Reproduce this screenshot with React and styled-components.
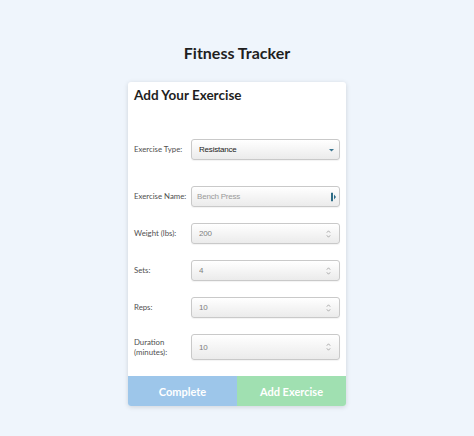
import React from "react";
import styled, { createGlobalStyle } from "styled-components";

const Global = createGlobalStyle`
  html, body { margin: 0; padding: 0; background: #eff5fc; }
  body { font-family: Lato, "Open Sans", sans-serif; }
  * { box-sizing: border-box; }
`;

const Page = styled.div`
  min-height: 436px;
  padding-top: 43px;
  display: flex;
  flex-direction: column;
  align-items: center;
`;

const Title = styled.h1`
  margin: 0 0 19px;
  font-family: Lato, sans-serif;
  font-weight: 700;
  font-size: 16px;
  line-height: 20px;
  color: #1f1f1f;
`;

const Card = styled.div`
  width: 218px;
  background: #fff;
  border-radius: 3px;
  box-shadow: 0 1px 5px rgba(0, 0, 0, 0.14);
  overflow: hidden;
`;

const Form = styled.div`
  display: flex;
  flex-direction: column;
  padding: 5px 6px 16px;
`;

const CardTitle = styled.h2`
  margin: 0 0 35px;
  font-family: Lato, sans-serif;
  font-weight: 700;
  font-size: 13.5px;
  line-height: 17px;
  color: #1f1f1f;
`;

const Row = styled.div`
  display: flex;
  align-items: center;
  height: ${(p) => p.$h ?? 21}px;
  margin-bottom: ${(p) => p.$mb ?? 16}px;
  &:last-child { margin-bottom: 0; }
`;

const Label = styled.label`
  flex: 0 0 57px;
  font-family: Lato, sans-serif;
  font-size: 7.8px;
  line-height: 10.5px;
  color: #4f4f4f;
`;

const Field = styled.div`
  position: relative;
  flex: 1;
  align-self: stretch;
`;

const fieldBase = `
  display: block;
  width: 100%;
  height: 100%;
  margin: 0;
  padding: 0 16px 0 7px;
  border: 1px solid #c9c9c9;
  border-radius: 3px;
  background: linear-gradient(#ffffff, #ebebeb);
  box-shadow: 0 1px 1px rgba(0,0,0,0.05);
  font-family: "Liberation Sans", Arial, sans-serif;
  font-size: 8px;
  letter-spacing: -0.2px;
  outline: none;
  appearance: none;
  -webkit-appearance: none;
`;

const Select = styled.select`
  ${fieldBase}
  color: #222;
`;

const Input = styled.input`
  ${fieldBase}
  padding-left: ${(p) => p.$pl ?? 7}px;
  color: #808080;
  &::placeholder { color: #9a9a9a; }
  &::-webkit-inner-spin-button,
  &::-webkit-outer-spin-button { -webkit-appearance: none; margin: 0; }
`;

const Adornment = styled.span`
  position: absolute;
  right: ${(p) => p.$r ?? 7}px;
  top: 50%;
  transform: translateY(-50%);
  display: flex;
  pointer-events: none;
`;

const Buttons = styled.div`
  display: grid;
  grid-template-columns: 1fr 1fr;
`;

const Button = styled.button`
  height: 30px;
  border: none;
  margin: 0;
  background: ${(p) => p.$bg};
  color: #fff;
  font-family: Lato, sans-serif;
  font-weight: 700;
  font-size: 11px;
  cursor: pointer;
`;

const Caret = () => (
  <svg width="5" height="4" viewBox="0 0 5 4">
    <path d="M0 1 H5 L2.5 3.5 Z" fill="#3a7590" />
  </svg>
);

const ListIcon = () => (
  <svg width="5" height="9" viewBox="0 0 5 9">
    <rect x="0" y="0" width="2" height="9" fill="#2d6c86" />
    <path d="M3 2 L5 4.5 L3 7 Z" fill="#2d6c86" />
  </svg>
);

const Spin = () => (
  <svg width="5" height="9" viewBox="0 0 5 9">
    <path d="M0.8 3.2 L2.5 1.3 L4.2 3.2 M0.8 5.8 L2.5 7.7 L4.2 5.8" fill="none" stroke="#a5a5a5" strokeWidth="0.9" />
  </svg>
);

const NumberRow = ({ label, value, h }) => (
  <Row $h={h}>
    <Label>{label}</Label>
    <Field>
      <Input type="number" defaultValue={value} readOnly />
      <Adornment $r={9}><Spin /></Adornment>
    </Field>
  </Row>
);

export default function App() {
  return (
    <>
      <Global />
      <Page>
        <Title>Fitness Tracker</Title>
        <Card>
          <Form>
            <CardTitle>Add Your Exercise</CardTitle>
            <Row $mb={26}>
              <Label>Exercise Type:</Label>
              <Field>
                <Select defaultValue="Resistance">
                  <option>Resistance</option>
                  <option>Cardio</option>
                </Select>
                <Adornment $r={6}><Caret /></Adornment>
              </Field>
            </Row>
            <Row>
              <Label>Exercise Name:</Label>
              <Field>
                <Input type="text" placeholder="Bench Press" readOnly $pl={5} />
                <Adornment $r={4}><ListIcon /></Adornment>
              </Field>
            </Row>
            <NumberRow label="Weight (lbs):" value="200" />
            <NumberRow label="Sets:" value="4" />
            <NumberRow label="Reps:" value="10" />
            <NumberRow label="Duration (minutes):" value="10" h={26} />
          </Form>
          <Buttons>
            <Button $bg="#9dc6ea">Complete</Button>
            <Button $bg="#a0e0b1">Add Exercise</Button>
          </Buttons>
        </Card>
      </Page>
    </>
  );
}
